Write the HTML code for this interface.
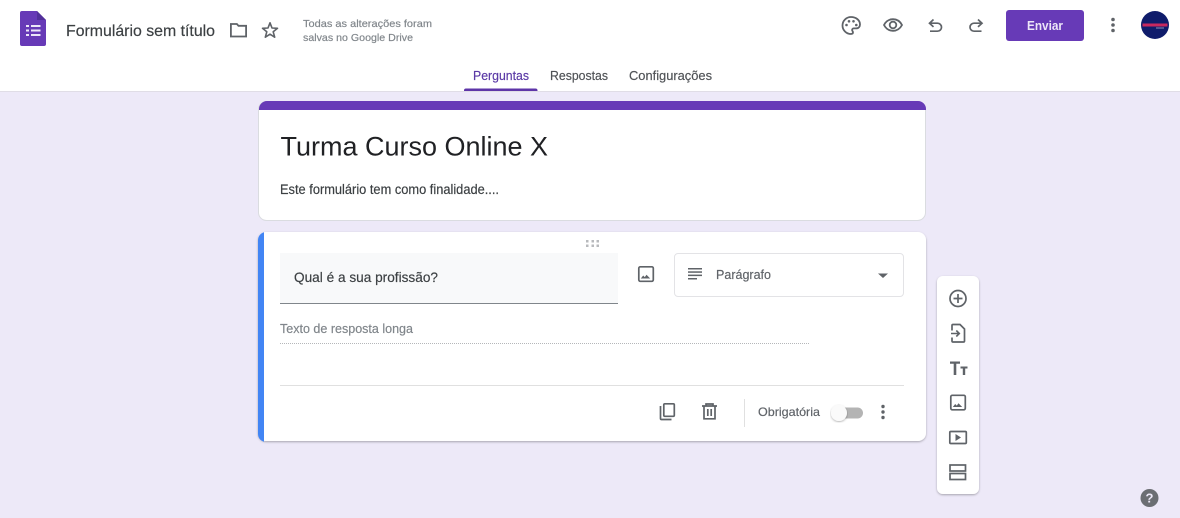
<!DOCTYPE html>
<html><head><meta charset="utf-8"><style>
html,body{margin:0;padding:0;width:1180px;height:518px;overflow:hidden;background:#ede9f8}
svg{position:absolute;left:0;top:0;filter:blur(.3px)}
text{font-family:"Liberation Sans",sans-serif;stroke-width:.18px}
</style></head><body>
<svg width="1180" height="518" viewBox="0 0 1180 518" xmlns="http://www.w3.org/2000/svg">
<defs>
<filter id="s" x="-5%" y="-5%" width="110%" height="112%"><feDropShadow dx="0" dy="1" stdDeviation="1" flood-color="#000" flood-opacity=".3"/></filter>
<clipPath id="c1"><rect x="259" y="101" width="667" height="120" rx="8"/></clipPath>
<clipPath id="c3"><rect x="258" y="232" width="668" height="210" rx="8"/></clipPath>
<clipPath id="av"><circle cx="1155" cy="25" r="14"/></clipPath>
</defs>
<rect width="1180" height="518" fill="#ede9f8"/>
<!-- header -->
<rect width="1180" height="91" fill="#fff"/>
<rect y="91" width="1180" height="1" fill="#e0dde6"/>
<!-- forms logo -->
<path d="M22 11h15l9 9v24a2 2 0 0 1-2 2H22a2 2 0 0 1-2-2V13a2 2 0 0 1 2-2z" fill="#673ab7"/>
<path d="M37 11l9 9h-9z" fill="#52309a"/>
<g fill="#ece6f8"><rect x="26" y="25" width="3" height="2"/><rect x="31" y="25" width="9.500" height="2"/><rect x="26" y="29.500" width="3" height="2"/><rect x="31" y="29.500" width="9.500" height="2"/><rect x="26" y="34" width="3" height="2"/><rect x="31" y="34" width="9.500" height="2"/></g>
<text x="66" y="36" font-size="16" fill="#3c4043" stroke="#3c4043" textLength="149" lengthAdjust="spacingAndGlyphs">Formulário sem título</text>
<!-- folder -->
<path d="M230.900 24h6l1.600 1.800h7.600v10.700h-15.200z" fill="none" stroke="#5f6368" stroke-width="1.800"/>
<!-- star -->
<path d="M270 22.800l2 5.200 5.500.3-4.300 3.500 1.500 5.400-4.700-3-4.700 3 1.500-5.400-4.300-3.500 5.500-.3z" fill="none" stroke="#5f6368" stroke-width="1.600" stroke-linejoin="round"/>
<text x="303" y="27" font-size="10.500" fill="#80868b" stroke="#80868b" textLength="129" lengthAdjust="spacingAndGlyphs">Todas as alterações foram</text>
<text x="303" y="41" font-size="10.500" fill="#80868b" stroke="#80868b" textLength="110" lengthAdjust="spacingAndGlyphs">salvas no Google Drive</text>
<!-- palette -->
<path d="M851 17a8.500 8.500 0 0 0 0 17c1.500 0 2-.9 2-1.700 0-1.100-.9-1.300-.9-2.300 0-1 .8-1.600 1.800-1.600h2.200c2.500 0 3.900-1.800 3.900-4 0-4.200-4-7.400-9-7.400z" fill="none" stroke="#5f6368" stroke-width="1.800"/>
<g fill="#5f6368"><circle cx="846.500" cy="25" r="1.300"/><circle cx="849" cy="21.300" r="1.300"/><circle cx="853.500" cy="21.300" r="1.300"/><circle cx="856.300" cy="25" r="1.300"/></g>
<!-- eye -->
<path d="M884 25c2-3.800 5.200-5.800 9-5.800s7 2 9 5.800c-2 3.800-5.200 5.800-9 5.800s-7-2-9-5.800z" fill="none" stroke="#5f6368" stroke-width="1.800"/>
<circle cx="893" cy="25" r="3.300" fill="none" stroke="#5f6368" stroke-width="1.800"/>
<!-- undo -->
<path d="M933.500 19.500l-4 3.700 4 3.700M930 23.200h7.500a4 4 0 0 1 0 8H930" fill="none" stroke="#5f6368" stroke-width="1.700"/>
<!-- redo -->
<path d="M978 19.500l4 3.700-4 3.700M981.500 23.200h-7.500a4 4 0 0 0 0 8h7.500" fill="none" stroke="#5f6368" stroke-width="1.700"/>
<!-- send -->
<rect x="1006" y="10" width="78" height="31" rx="3" fill="#673ab7"/>
<text x="1027" y="30" font-size="12.500" font-weight="700" fill="#ece6f8" textLength="36" lengthAdjust="spacingAndGlyphs">Enviar</text>
<g fill="#5f6368"><circle cx="1113" cy="19.500" r="1.800"/><circle cx="1113" cy="25" r="1.800"/><circle cx="1113" cy="30.500" r="1.800"/></g>
<!-- avatar -->
<circle cx="1155" cy="25" r="14" fill="#0f1c6b"/>
<rect x="1142.500" y="23.500" width="25" height="3" fill="#c8285f" clip-path="url(#av)"/>
<rect x="1156" y="27.500" width="8" height="1" fill="#8c8fb8"/>
<!-- tabs -->
<text x="473" y="80" font-size="13" fill="#5b3aa6" stroke="#5b3aa6" textLength="56" lengthAdjust="spacingAndGlyphs">Perguntas</text>
<text x="550" y="80" font-size="13" fill="#4f5256" stroke="#4f5256" textLength="58" lengthAdjust="spacingAndGlyphs">Respostas</text>
<text x="629" y="80" font-size="13" fill="#4f5256" stroke="#4f5256" textLength="83" lengthAdjust="spacingAndGlyphs">Configurações</text>
<path d="M464 91v-.5a2 2 0 0 1 2-2h69.500a2 2 0 0 1 2 2v.5z" fill="#5e35a8"/>
<!-- title card -->
<rect x="258.500" y="101.500" width="667" height="119" rx="8" fill="#fff" stroke="#dadce0"/>
<rect x="258" y="101" width="668" height="9" fill="#673ab7" clip-path="url(#c1)"/>
<text x="280.500" y="155.500" font-size="27" fill="#202124" textLength="267.500" lengthAdjust="spacingAndGlyphs">Turma Curso Online X</text>
<text x="280" y="194" font-size="13.500" fill="#3c4043" stroke="#3c4043" textLength="219" lengthAdjust="spacingAndGlyphs">Este formulário tem como finalidade....</text>
<!-- question card -->
<rect x="258" y="232" width="668" height="209" rx="8" fill="#fff" filter="url(#s)"/>
<rect x="258" y="232" width="6" height="210" fill="#4285f4" clip-path="url(#c3)"/>
<g fill="#b8babd"><rect x="586" y="240" width="2.500" height="2.500"/><rect x="591.500" y="240" width="2.500" height="2.500"/><rect x="596.500" y="240" width="2.500" height="2.500"/><rect x="586" y="244.500" width="2.500" height="2.500"/><rect x="591.500" y="244.500" width="2.500" height="2.500"/><rect x="596.500" y="244.500" width="2.500" height="2.500"/></g>
<rect x="280" y="253" width="338" height="50" fill="#f8f9fa"/>
<rect x="280" y="303" width="338" height="1" fill="#80868b"/>
<text x="294" y="282" font-size="14" fill="#3c4043" stroke="#3c4043" textLength="144" lengthAdjust="spacingAndGlyphs">Qual é a sua profissão?</text>
<!-- image icon -->
<rect x="638.800" y="266.800" width="14.500" height="14.500" rx="1.500" fill="none" stroke="#5f6368" stroke-width="1.700"/>
<path d="M640.800 278.500l2.400-3 1.600 1.600 1.700-2.400 3.700 3.800z" fill="#5f6368"/>
<!-- dropdown -->
<rect x="674.500" y="253.500" width="229" height="43" rx="3.500" fill="#fff" stroke="#e3e3e6"/>
<g fill="#5f6368"><rect x="688" y="268" width="14" height="1.500"/><rect x="688" y="271.300" width="14" height="1.500"/><rect x="688" y="274.600" width="14" height="1.500"/><rect x="688" y="278" width="9" height="1.500"/></g>
<text x="716" y="279" font-size="12.500" fill="#5f6368" stroke="#5f6368" textLength="55" lengthAdjust="spacingAndGlyphs">Parágrafo</text>
<path d="M878 273.500h10l-5 4.500z" fill="#5f6368"/>
<text x="280" y="333" font-size="12.500" fill="#80868b" stroke="#80868b" textLength="133" lengthAdjust="spacingAndGlyphs">Texto de resposta longa</text>
<line x1="280" y1="343.500" x2="810" y2="343.500" stroke="#b5b7ba" stroke-dasharray="1 1"/>
<rect x="280" y="385" width="624" height="1" fill="#e0e0e0"/>
<!-- copy -->
<path d="M660.500 406v12.500a1 1 0 0 0 1 1h10" fill="none" stroke="#5f6368" stroke-width="1.700"/>
<rect x="663.800" y="403.800" width="10.500" height="12.500" rx="1" fill="none" stroke="#5f6368" stroke-width="1.700"/>
<!-- trash -->
<path d="M702 406h15M706 406v-2h7v2M704 406.500v12.300h11v-12.300M707.800 409v7M711.200 409v7" fill="none" stroke="#5f6368" stroke-width="1.700"/>
<rect x="744" y="399" width="1" height="28" fill="#e0e0e0"/>
<text x="758" y="416" font-size="12" fill="#5f6368" stroke="#5f6368" textLength="62" lengthAdjust="spacingAndGlyphs">Obrigatória</text>
<rect x="840" y="407.500" width="23" height="11" rx="5.500" fill="#b4b4b4"/>
<circle cx="839" cy="413" r="8" fill="#fafafa" filter="url(#s)"/>
<g fill="#5f6368"><circle cx="883" cy="406.500" r="1.700"/><circle cx="883" cy="412" r="1.700"/><circle cx="883" cy="417.500" r="1.700"/></g>
<!-- sidebar -->
<rect x="937" y="276" width="42" height="218" rx="6" fill="#fff" filter="url(#s)"/>
<circle cx="958" cy="298.500" r="8" fill="none" stroke="#5f6368" stroke-width="1.700"/>
<path d="M958 294v9M953.500 298.500h9" stroke="#5f6368" stroke-width="1.700"/>
<path d="M952 330.500v-5a1 1 0 0 1 1-1h7l4.500 4.500v12a1 1 0 0 1-1 1h-10.500a1 1 0 0 1-1-1v-3.500" fill="none" stroke="#5f6368" stroke-width="1.700"/>
<path d="M951 333.500h8M956.300 330.500l3 3-3 3" fill="none" stroke="#5f6368" stroke-width="1.600"/>
<path d="M950 361.500h10v2.300h-3.700v11.200h-2.600v-11.200H950zM960.500 366.500h7v2h-2.300v6.500h-2.400v-6.500h-2.300z" fill="#5f6368"/>
<rect x="950.800" y="395.300" width="14.500" height="14.500" rx="1.500" fill="none" stroke="#5f6368" stroke-width="1.700"/>
<path d="M952.800 407l2.400-3 1.600 1.600 1.700-2.400 3.700 3.800z" fill="#5f6368"/>
<rect x="949.800" y="431.500" width="16.500" height="12" rx="1" fill="none" stroke="#5f6368" stroke-width="1.700"/>
<path d="M955.500 434l5.500 3.500-5.500 3.500z" fill="#5f6368"/>
<rect x="950" y="465" width="15.500" height="6" fill="none" stroke="#5f6368" stroke-width="1.700"/>
<rect x="950" y="473.500" width="15.500" height="6" fill="none" stroke="#5f6368" stroke-width="1.700"/>
<!-- help -->
<circle cx="1149.500" cy="498" r="9" fill="#6b6e73"/>
<text x="1149.500" y="502.500" font-size="13" font-weight="700" fill="#ede9f8" text-anchor="middle">?</text>
</svg>
</body></html>
